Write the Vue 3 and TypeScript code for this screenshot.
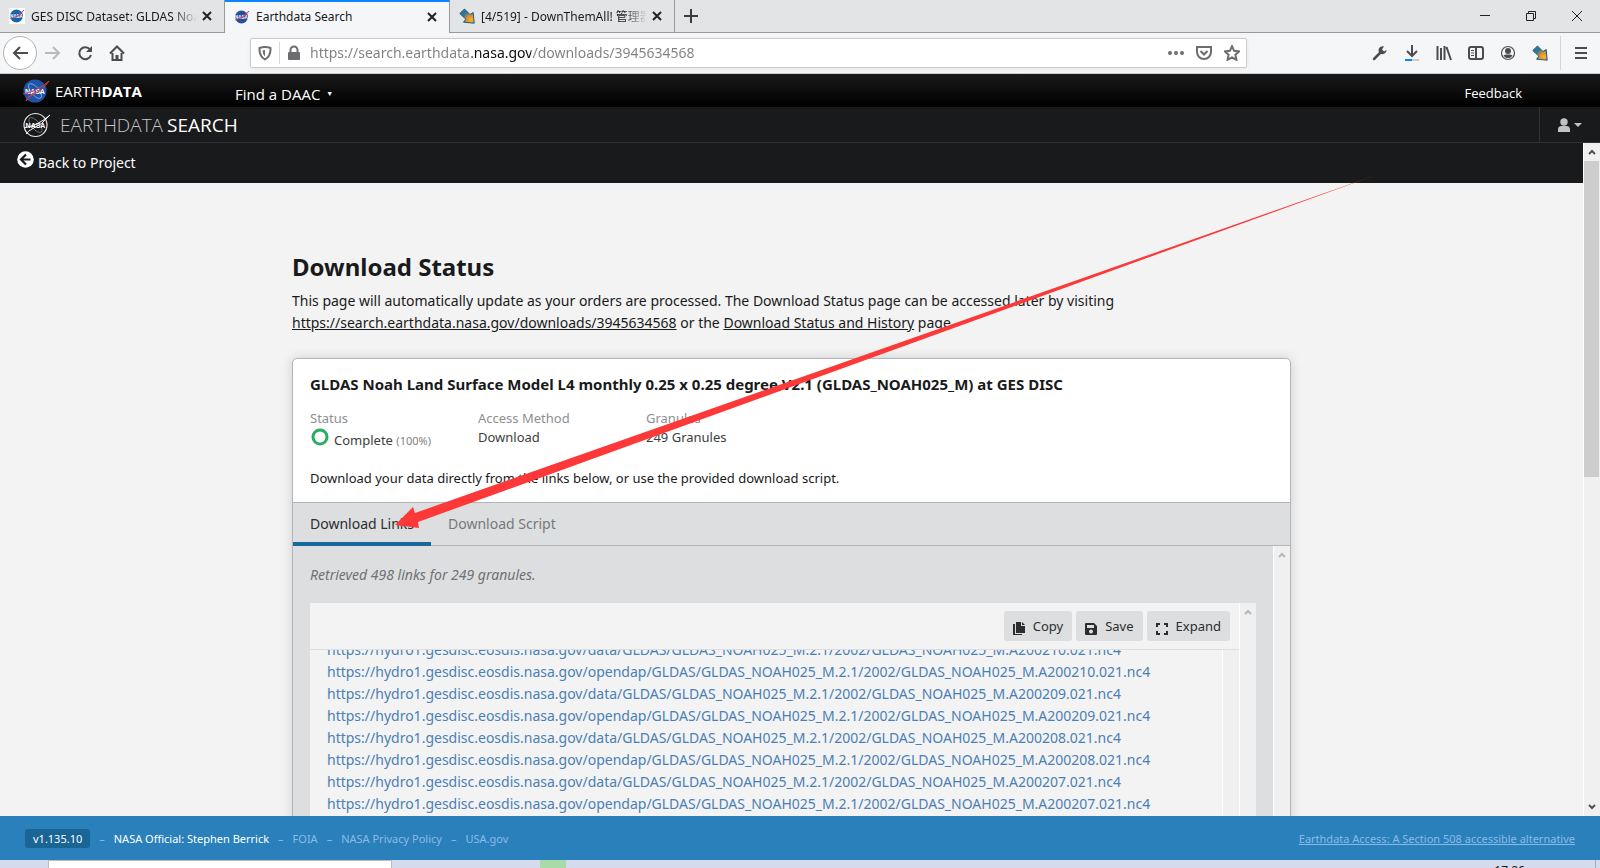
<script setup lang="ts">
import { ref } from 'vue'

const address = ref('https://search.earthdata.nasa.gov/downloads/3945634568')
const activeTab = ref('links')

const base = 'https://hydro1.gesdisc.eosdis.nasa.gov/'
const rest = '/GLDAS/GLDAS_NOAH025_M.2.1/2002/GLDAS_NOAH025_M.A'
const links: string[] = ['200210', '200209', '200208', '200207'].flatMap((month) =>
  ['data', 'opendap'].map((kind) => `${base}${kind}${rest}${month}.021.nc4`),
)

const footerLinks: string[] = ['FOIA', 'NASA Privacy Policy', 'USA.gov']
</script>

<template>
  <div class="app">
    <div class="tabstrip">
      <div class="tab">
        <svg class="fav" viewBox="0 0 16 16" aria-hidden="true">
          <rect width="16" height="16" fill="#fff" />
          <circle cx="7.500" cy="8" r="6.500" fill="#1766ad" />
          <text x="7.500" y="10" font-size="4.500" text-anchor="middle" class="nasa">NASA</text>
          <path d="M1 11Q9 9 15 2Q11 8 7 9" fill="none" stroke="#e23a4e" stroke-width=".8" />
        </svg>
        <span class="tab-title fade">GES DISC Dataset: GLDAS Noah</span>
        <button class="close" aria-label="Close tab"><svg viewBox="0 0 12 12"><path d="M2 2l8 8M10 2l-8 8" /></svg></button>
      </div>
      <div class="tab active">
        <svg class="fav" viewBox="0 0 16 16" aria-hidden="true">
          <circle cx="7.500" cy="8" r="6.500" fill="#2450a0" />
          <text x="7.500" y="10" font-size="4.500" text-anchor="middle" class="nasa">NASA</text>
          <path d="M1 11Q9 9 15 2Q11 8 7 9" fill="none" stroke="#e23a4e" stroke-width=".8" />
        </svg>
        <span class="tab-title">Earthdata Search</span>
        <button class="close" aria-label="Close tab"><svg viewBox="0 0 12 12"><path d="M2 2l8 8M10 2l-8 8" /></svg></button>
      </div>
      <div class="tab">
        <svg class="fav" viewBox="0 0 16 16" aria-hidden="true">
          <defs>
            <radialGradient id="glow" cx=".8" cy=".8" r=".65">
              <stop offset="0" stop-color="#ffb428" />
              <stop offset=".5" stop-color="#d9922f" />
              <stop offset="1" stop-color="#2f7596" />
            </radialGradient>
          </defs>
          <path d="M.8 5.500L5.500 1L11 6.500L14.200 4.500L15.200 15.200L4.500 14.200L6.800 11.200Z" fill="url(#glow)" stroke="#1f5f80" />
        </svg>
        <span class="tab-title fade">[4/519] - DownThemAll! 管理器</span>
        <button class="close" aria-label="Close tab"><svg viewBox="0 0 12 12"><path d="M2 2l8 8M10 2l-8 8" /></svg></button>
      </div>
      <button class="new-tab" aria-label="New tab"><svg viewBox="0 0 16 16"><path d="M8 1v14M1 8h14" /></svg></button>
      <div class="win-controls">
        <button aria-label="Minimize"><svg viewBox="0 0 12 12"><path d="M1 5.500h10" /></svg></button>
        <button aria-label="Restore"><svg viewBox="0 0 12 12"><path d="M1.500 3.500h7v7h-7zM3.500 3.500v-2h7v7h-2" /></svg></button>
        <button aria-label="Close window"><svg viewBox="0 0 12 12"><path d="M1 1l10 10M11 1l-10 10" /></svg></button>
      </div>
    </div>

    <div class="toolbar">
      <div class="nav">
        <button class="back" aria-label="Back"><svg viewBox="0 0 16 16"><path d="M8 2L2 8l6 6M2 8h14" /></svg></button>
        <button class="forward" aria-label="Forward"><svg viewBox="0 0 16 16"><path d="M8 2l6 6-6 6M14 8H0" /></svg></button>
        <button aria-label="Reload"><svg viewBox="0 0 16 16"><path d="M13 4.500A6 6 0 1 0 14 10" /><path d="M15 1v6H9z" fill="#4c4c50" stroke="none" /></svg></button>
        <button aria-label="Home"><svg viewBox="0 0 16 16"><path d="M1 8.500L8 1.500l7 7M3.500 8v7h9V8" /><path d="M6.500 15v-5h3v5z" fill="#4c4c50" stroke="none" /></svg></button>
      </div>
      <div class="urlbar">
        <svg viewBox="0 0 16 16"><path d="M2.500 3Q8 1 13.500 3Q14 11 8 14.500Q2 11 2.500 3Z" /><path d="M8 5v6.500Q5.500 9 5.500 5.500z" fill="#6d6d70" stroke="none" /></svg>
        <span class="url-sep"></span>
        <svg viewBox="0 0 16 16"><path d="M4.500 8V5a3.500 3.500 0 0 1 7 0v3" /><rect x="2" y="7" width="12" height="8" rx="1" fill="#6d6d70" stroke="none" /></svg>
        <input v-model="address" class="address" type="text" aria-label="Address" />
        <div class="url-actions">
          <button aria-label="Page actions"><svg viewBox="0 0 16 16"><g fill="#6d6d70" stroke="none"><circle cx="2" cy="8" r="2" /><circle cx="8" cy="8" r="2" /><circle cx="14" cy="8" r="2" /></g></svg></button>
          <button aria-label="Save to Pocket"><svg viewBox="0 0 16 16"><path d="M1 2h14v5a7 7 0 0 1-14 0zM4.500 6L8 9.500 11.500 6" /></svg></button>
          <button aria-label="Bookmark"><svg viewBox="0 0 16 16"><path d="M8 1.200l2.100 4.600 5 .6-3.700 3.400 1 5L8 12.300l-4.400 2.500 1-5L.9 6.400l5-.6z" /></svg></button>
        </div>
      </div>
      <div class="tools">
        <button aria-label="Developer tools"><svg viewBox="0 0 16 16"><path d="M2 14L9 7" stroke-width="2.500" stroke-linecap="round" /><path d="M12 1.500A4 4 0 1 0 14.500 5L12 6.500 10 4.500z" fill="#4c4c50" stroke="none" /></svg></button>
        <button aria-label="Downloads"><svg viewBox="0 0 16 16"><path d="M8 0v11M3 6l5 5 5-5" /><path d="M1 15h14" stroke="#ccccd0" /><path d="M1 15h7" stroke="#0a84ff" /></svg></button>
        <button aria-label="Library"><svg viewBox="0 0 16 16"><path d="M1.500 1v14M5 3v12M8.500 1v14M10.500 2l4.500 13" /></svg></button>
        <button aria-label="Sidebars"><svg viewBox="0 0 16 16"><rect x="1" y="2" width="14" height="12" rx="2" /><path d="M8 2v12" /><path d="M3 5.500h3M3 8h3M3 10.500h3" stroke-width="1" /></svg></button>
        <button aria-label="Account"><svg viewBox="0 0 16 16"><circle cx="8" cy="8" r="6.500" stroke-width="1.200" /><circle cx="8" cy="6" r="3" fill="#4c4c50" stroke="none" /><path d="M3.500 10.500Q5 9 8 9.500Q11 9 12.500 10.500A5.200 5.200 0 0 1 3.500 10.500z" fill="#4c4c50" stroke="none" /></svg></button>
        <button aria-label="DownThemAll"><svg class="dta" viewBox="0 0 16 16"><path d="M.8 5.500L5.500 1L11 6.500L14.200 4.500L15.200 15.200L4.500 14.200L6.800 11.200Z" fill="url(#glow)" stroke="#1f5f80" /></svg></button>
        <span class="tool-sep"></span>
        <button aria-label="Menu"><svg viewBox="0 0 16 16"><path d="M2 3h12M2 8h12M2 13h12" /></svg></button>
      </div>
    </div>

    <header class="edl">
      <a href="#" class="edl-brand">
        <svg viewBox="0 0 28 24" aria-hidden="true">
          <circle cx="12" cy="12" r="11.500" fill="#1f55a8" />
          <ellipse cx="12" cy="12" rx="4" ry="9" fill="none" stroke="#9fbbe4" stroke-width=".7" transform="rotate(-40 12 12)" />
          <text x="12" y="14.500" font-size="7" text-anchor="middle" class="nasa">NASA</text>
          <path d="M0 15Q15 12 26 2Q19 12 9 16Q5 18 3 22Q6 16 12 13" fill="none" stroke="#e03c46" />
        </svg>
        <span>EARTH<b>DATA</b></span>
      </a>
      <button class="daac">Find a DAAC <span class="tri">▼</span></button>
      <a href="#" class="feedback">Feedback</a>
    </header>

    <div class="brandbar">
      <a href="#" class="brand">
        <svg viewBox="0 0 28 26" aria-hidden="true">
          <circle cx="12.500" cy="13" r="11.500" fill="none" stroke="#e6e6e6" stroke-width="1.200" />
          <ellipse cx="12.500" cy="13" rx="4" ry="9" fill="none" stroke="#999" stroke-width=".6" transform="rotate(-40 12.500 13)" />
          <text x="12.500" y="15.500" font-size="7" text-anchor="middle" class="nasa">NASA</text>
          <path d="M1 16Q16 13 27 3Q19 13 9 17Q5 19 3 22" fill="none" stroke="#fff" />
        </svg>
        <span class="thin">EARTHDATA</span><span>SEARCH</span>
      </a>
      <button class="user" aria-label="User menu">
        <svg viewBox="0 0 24 14"><circle cx="6" cy="4" r="3.700" /><path d="M0 14v-2.500Q0 8 3.500 8h5Q12 8 12 11.500V14zM16 5h8l-4 4z" /></svg>
      </button>
    </div>

    <div class="viewport">
      <main>
        <nav class="backbar">
          <a href="#">
            <svg viewBox="0 0 17 17" aria-hidden="true"><circle cx="8.500" cy="8.500" r="8.300" fill="#fff" /><path d="M9 3.500l-5 5 5 5M4 8.500h9.500" fill="none" stroke="#191a1b" stroke-width="2.200" /></svg>
            <span>Back to Project</span>
          </a>
        </nav>
        <div class="content">
          <h1>Download Status</h1>
          <p class="intro">
            This page will automatically update as your orders are processed. The Download Status page can be accessed later by visiting<br />
            <a href="#">https://search.earthdata.nasa.gov/downloads/3945634568</a> or the
            <a href="#">Download Status and History</a> page.
          </p>

          <section class="card">
            <div class="card-head">
              <h2>GLDAS Noah Land Surface Model L4 monthly 0.25 x 0.25 degree V2.1 (GLDAS_NOAH025_M) at GES DISC</h2>
              <dl class="meta">
                <div>
                  <dt>Status</dt>
                  <dd class="status">
                    <svg viewBox="0 0 18 18" aria-hidden="true"><circle cx="9" cy="9" r="7" fill="none" stroke="#29ae61" stroke-width="3" /></svg>
                    <span>Complete <small>(100%)</small></span>
                  </dd>
                </div>
                <div><dt>Access Method</dt><dd>Download</dd></div>
                <div><dt>Granules</dt><dd>249 Granules</dd></div>
              </dl>
              <p class="note">Download your data directly from the links below, or use the provided download script.</p>
            </div>
            <div class="card-tabs" role="tablist">
              <button role="tab" :class="{ on: activeTab === 'links' }" @click="activeTab = 'links'">Download Links</button>
              <button role="tab" :class="{ on: activeTab === 'script' }" @click="activeTab = 'script'">Download Script</button>
            </div>
            <div class="panel">
              <div class="panel-body">
                <p class="retrieved">Retrieved 498 links for 249 granules.</p>
                <div class="listbox">
                  <div class="list-main">
                    <div class="list-actions">
                      <button><svg viewBox="0 0 12 13"><path d="M3 0h5v4h4v7H3z" /><path d="M9 0l3 3H9z" /><path d="M0 2h2v10h7v1H0z" /></svg>Copy</button>
                      <button><svg viewBox="0 0 12 13"><path fill-rule="evenodd" d="M1 1h8l3 3v8q0 1-1 1H1q-1 0-1-1V2q0-1 1-1zM2 3v3h7V3zM6 7.500a2 2 0 1 0 .01 0z" /></svg>Save</button>
                      <button><svg viewBox="0 0 12 13"><path d="M0 1h4v2H2v2H0zM8 1h4v4h-2V3H8zM0 9h2v2h2v2H0zM10 9h2v4H8v-2h2z" /></svg>Expand</button>
                    </div>
                    <div class="list-row">
                      <ul>
                        <li v-for="link in links" :key="link"><a :href="link">{{ link }}</a></li>
                      </ul>
                      <div class="scroll"></div>
                    </div>
                  </div>
                  <div class="scroll dim"><svg viewBox="0 0 8 6"><path d="M1 5l3-3 3 3" /></svg></div>
                </div>
              </div>
              <div class="scroll dim"><svg viewBox="0 0 8 6"><path d="M1 5l3-3 3 3" /></svg></div>
            </div>
          </section>
        </div>
      </main>
      <div class="scroll page-scroll">
        <svg viewBox="0 0 8 6"><path d="M1 5l3-3 3 3" /></svg>
        <div class="thumb"></div>
        <svg viewBox="0 0 8 6"><path d="M1 1l3 3 3-3" /></svg>
      </div>
    </div>

    <footer>
      <span class="version">v1.135.10</span>
      <span class="dash">–</span>
      <span class="official">NASA Official: Stephen Berrick</span>
      <template v-for="item in footerLinks" :key="item">
        <span class="dash">–</span>
        <a href="#">{{ item }}</a>
      </template>
      <a href="#" class="access">Earthdata Access: A Section 508 accessible alternative</a>
    </footer>

    <div class="taskbar">
      <div class="search-box"></div>
      <div class="running"></div>
      <time>17:26</time>
      <div class="desktop-edge"></div>
    </div>

    <svg class="arrow" width="1600" height="868" viewBox="0 0 1600 868" aria-hidden="true">
      <path d="M395 525L413 507L415 513L1376 175L418 522L419 528Z" fill="#fc3838" />
    </svg>
  </div>
</template>

<style>
body {
  margin: 0;
  background: #f3f3f3;
}
</style>

<style scoped>
* {
  box-sizing: border-box;
}
.app {
  position: relative;
  display: flex;
  flex-direction: column;
  height: 100vh;
  overflow: hidden;
  font-family: 'Noto Sans', 'Noto Sans CJK SC', sans-serif;
  font-size: 14px;
  color: #191a1b;
}
button {
  padding: 0;
  border: 0;
  background: none;
  font: inherit;
  color: inherit;
}
a {
  color: inherit;
  text-decoration: none;
}
svg {
  display: block;
  flex: none;
}
.nasa {
  font-family: 'Liberation Sans', sans-serif;
  font-weight: bold;
  fill: #fff;
}
.tabstrip {
  display: flex;
  flex: none;
  height: 33px;
  background: #e3e4e6;
  font-size: 12px;
}
.tab {
  display: flex;
  align-items: center;
  width: 225px;
  padding: 0 11px 0 9px;
  border-right: 1px solid #98999b;
  border-bottom: 1px solid #98999b;
}
.tab.active {
  padding-bottom: 2px;
  border-top: 2px solid #0a84ff;
  border-bottom: 0;
  background: #f5f6f7;
}
.fav {
  width: 16px;
  height: 16px;
  margin-right: 6px;
}
.tab-title {
  flex: 1;
  min-width: 0;
  overflow: hidden;
  white-space: nowrap;
}
.fade {
  -webkit-mask-image: linear-gradient(90deg, #000 calc(100% - 24px), transparent);
  mask-image: linear-gradient(90deg, #000 calc(100% - 24px), transparent);
}
.close svg,
.win-controls svg {
  width: 12px;
  height: 12px;
  fill: none;
  stroke: #202124;
}
.close {
  margin-left: 4px;
}
.close svg {
  stroke-width: 2;
}
.new-tab {
  padding: 0 8px;
  border-bottom: 1px solid #98999b;
}
.new-tab svg {
  width: 16px;
  height: 16px;
  fill: none;
  stroke: #3c3c40;
  stroke-width: 2;
}
.win-controls {
  display: flex;
  flex: 1;
  justify-content: flex-end;
  border-bottom: 1px solid #98999b;
}
.win-controls button {
  display: flex;
  align-items: center;
  justify-content: center;
  width: 46px;
}
.toolbar {
  display: flex;
  flex: none;
  align-items: center;
  height: 41px;
  padding-right: 11px;
  border-bottom: 1px solid #cccccc;
  background: #f5f6f7;
}
.toolbar svg {
  width: 16px;
  height: 16px;
  fill: none;
  stroke: #4c4c50;
  stroke-width: 2;
}
.toolbar .dta {
  stroke-width: 1;
}
.nav {
  display: flex;
  align-items: center;
  width: 250px;
  padding-left: 3px;
}
.nav button {
  display: grid;
  place-items: center;
  width: 32px;
  height: 32px;
}
.nav .back {
  width: 34px;
  height: 34px;
  border: 1px solid #b4b4b6;
  border-radius: 50%;
  background: #fff;
}
.nav .forward svg {
  stroke: #b9babc;
}
.urlbar {
  display: flex;
  flex: 1;
  align-items: center;
  height: 30px;
  padding: 0 6px;
  border: 1px solid #ccccce;
  border-radius: 2px;
  background: #fff;
  box-shadow: 0 1px 4px #00000010;
}
.urlbar svg {
  stroke: #6d6d70;
}
.url-sep {
  width: 1px;
  height: 22px;
  margin: 0 6px;
  background: #d8d8da;
}
.address {
  flex: 1;
  min-width: 0;
  margin-left: 8px;
  padding: 0;
  border: 0;
  outline: 0;
  background: linear-gradient(90deg, #808083 162px, #0c0c0d 162px 221px, #808083 221px);
  background-clip: text;
  -webkit-background-clip: text;
  color: transparent;
  font: 14px/22px 'Noto Sans', sans-serif;
}
.url-actions {
  display: flex;
  gap: 12px;
}
.tools {
  display: flex;
  align-items: center;
  gap: 16px;
  margin-left: 125px;
}
.tool-sep {
  width: 1px;
  height: 34px;
  margin: 0 -4px;
  background: #d4d5d7;
}
.edl {
  display: flex;
  flex: none;
  align-items: center;
  height: 33px;
  padding: 0 78px 0 23px;
  background: linear-gradient(#191919, #000);
  color: #fff;
  font: 15px/20px 'Open Sans', sans-serif;
}
.edl-brand {
  display: flex;
  align-items: center;
  gap: 4px;
  width: 212px;
}
.edl-brand svg {
  width: 28px;
  height: 24px;
}
.daac {
  display: flex;
  align-items: center;
  gap: 6px;
  padding-top: 6px;
}
.tri {
  font-size: 7px;
}
.feedback {
  margin-left: auto;
  padding-top: 4px;
  font-size: 13px;
}
.brandbar {
  display: flex;
  flex: none;
  align-items: stretch;
  justify-content: space-between;
  height: 36px;
  border-bottom: 1px solid #303132;
  background: #191a1b;
  color: #fff;
  font: 19px 'Open Sans', sans-serif;
}
.brand {
  display: flex;
  align-items: center;
  gap: 4px;
  padding-left: 23px;
}
.brand svg {
  width: 28px;
  height: 26px;
  margin-right: 5px;
}
.thin {
  color: #c6c6c6;
  font-weight: 300;
}
.user {
  width: 61px;
  padding-left: 18px;
  border-left: 1px solid #303132;
}
.user svg {
  width: 24px;
  height: 14px;
  fill: #c2c2c3;
}
.viewport {
  display: flex;
  flex: 1;
  min-height: 0;
}
main {
  flex: 1;
  min-width: 0;
  overflow: hidden;
}
.backbar {
  height: 40px;
  padding: 8px 17px;
  background: #191a1b;
  color: #fff;
}
.backbar a {
  display: flex;
  gap: 4px;
  line-height: 24px;
}
.backbar svg {
  width: 17px;
  height: 17px;
}
.content {
  max-width: 999px;
  margin: 0 auto;
  padding-top: 68px;
}
h1 {
  margin: 0 0 7px;
  font-size: 24px;
  line-height: 32px;
}
.intro {
  margin: 0 0 24px;
  line-height: 22px;
}
.intro a {
  text-decoration: underline;
}
.card {
  border: 1px solid #b4b5b7;
  border-radius: 5px;
  background: #fff;
  box-shadow: 0 0 12px #00000026;
}
.card-head {
  padding: 14px 17px 15px;
}
h2 {
  margin: 0 0 14px;
  font-size: 15px;
  line-height: 22px;
}
.meta {
  display: flex;
  height: 42px;
  margin: 0 0 18px;
  font-size: 13px;
  line-height: 19px;
}
.meta > div {
  width: 168px;
}
dt {
  color: #8e8f90;
}
dd {
  margin: 0;
  color: #3c3d3e;
}
.status {
  display: flex;
  gap: 5px;
  padding-left: 1px;
}
.status svg {
  width: 18px;
  height: 18px;
}
.status span {
  line-height: 24px;
}
small {
  font-size: 11px;
  color: #808182;
}
.note {
  margin: 0;
  font-size: 13px;
  line-height: 18px;
}
.card-tabs {
  display: flex;
  height: 44px;
  border-top: 1px solid #b4b5b7;
  border-bottom: 1px solid #b4b5b7;
  background: #dddee0;
}
.card-tabs button {
  height: 43px;
  padding: 2px 17px 0;
  border-bottom: 4px solid transparent;
  color: #77787a;
}
.card-tabs .on {
  border-color: #17689b;
  color: #2c2d2f;
}
.panel {
  display: flex;
  background: #dddee0;
}
.panel-body {
  flex: 1;
  min-width: 0;
  padding: 18px 17px 0;
}
.retrieved {
  margin: 0 0 17px;
  color: #707173;
  font-style: italic;
  line-height: 22px;
}
.listbox {
  display: flex;
  background: #f3f3f3;
}
.list-main {
  flex: 1;
  min-width: 0;
}
.list-actions {
  display: flex;
  justify-content: flex-end;
  gap: 4px;
  height: 47px;
  padding: 8px 9px;
  border-bottom: 1px solid #dddee0;
}
.list-actions button {
  display: flex;
  align-items: center;
  gap: 8px;
  height: 30px;
  padding: 0 9px;
  border-radius: 3px;
  background: #dddee0;
  color: #2c2d2f;
  font-size: 13px;
}
.list-actions svg {
  width: 12px;
  height: 13px;
  margin-top: 4px;
  fill: #2c2d2f;
}
.list-row {
  display: flex;
  overflow: hidden;
}
ul {
  flex: 1;
  min-width: 0;
  margin: -11px 0 0;
  padding: 0 16px 12px 17px;
  list-style: none;
  line-height: 22px;
  color: #4a80b5;
  white-space: nowrap;
}
.scroll {
  flex: none;
  width: 17px;
  border-left: 1px solid #fff;
  background: #f0f0f0;
}
.scroll svg {
  width: 8px;
  height: 6px;
  margin: 6px 4px;
  fill: none;
  stroke: #505050;
  stroke-width: 2;
}
.dim svg {
  stroke: #b8b8b8;
}
.page-scroll {
  display: flex;
  flex-direction: column;
}
.thumb {
  flex: none;
  width: 15px;
  height: 47%;
  margin-bottom: auto;
  background: #cdcdcd;
}
footer {
  display: flex;
  flex: none;
  align-items: center;
  height: 44px;
  padding: 0 25px;
  background: #2a80bb;
  color: #8abbe6;
  font-size: 11px;
}
.version {
  padding: 0 8px;
  border-radius: 3px;
  background: #186596;
  color: #fff;
  line-height: 19px;
}
.dash {
  margin: 0 9px;
}
.official {
  color: #fff;
}
.access {
  margin-left: auto;
  text-decoration: underline;
}
.taskbar {
  display: flex;
  flex: none;
  height: 8px;
  overflow: hidden;
  background: #d4dbec;
  font-size: 12px;
}
.search-box {
  width: 344px;
  margin-left: 48px;
  border: 1px solid #bbbdc2;
  border-bottom: 0;
  background: #fff;
}
.running {
  width: 26px;
  margin-left: 148px;
  background: #a8dba8;
}
time {
  margin-left: auto;
  line-height: 22px;
}
.desktop-edge {
  width: 5px;
  margin-left: 70px;
  border-left: 1px solid #a5abb8;
}
.arrow {
  position: absolute;
  top: 0;
  left: 0;
  pointer-events: none;
}
</style>
